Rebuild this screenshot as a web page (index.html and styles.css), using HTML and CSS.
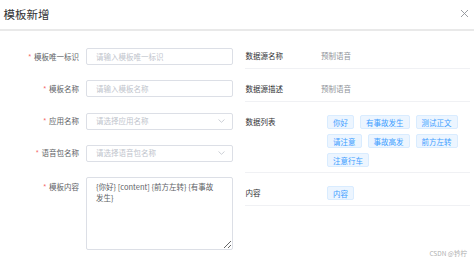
FILE: index.html
```html
<!DOCTYPE html>
<html lang="zh-CN">
<head>
<meta charset="utf-8">
<title>模板新增</title>
<link rel="stylesheet" href="styles.css">
</head>
<body>
<div class="dialog">
  <div class="header">
    <span class="title">模板新增</span>
    <span class="close"><svg width="9" height="9" viewBox="0 0 9 9"><path d="M1 1L8 8M8 1L1 8" stroke="#909399" stroke-width="0.9" fill="none"/></svg></span>
  </div>
  <div class="body">
    <div class="form">
      <div class="row">
        <label class="label"><span class="star">*</span>模板唯一标识</label>
        <div class="control"><input class="input" placeholder="请输入模板唯一标识"></div>
      </div>
      <div class="row">
        <label class="label"><span class="star">*</span>模板名称</label>
        <div class="control"><input class="input" placeholder="请输入模板名称"></div>
      </div>
      <div class="row">
        <label class="label"><span class="star">*</span>应用名称</label>
        <div class="control select"><span class="ph">请选择应用名称</span><svg class="chev" width="7" height="4" viewBox="0 0 7 4"><path d="M0.5 0.5L3.5 3.3L6.5 0.5" stroke="#c0c4cc" stroke-width="0.8" fill="none"/></svg></div>
      </div>
      <div class="row">
        <label class="label"><span class="star">*</span>语音包名称</label>
        <div class="control select"><span class="ph">请选择语音包名称</span><svg class="chev" width="7" height="4" viewBox="0 0 7 4"><path d="M0.5 0.5L3.5 3.3L6.5 0.5" stroke="#c0c4cc" stroke-width="0.8" fill="none"/></svg></div>
      </div>
      <div class="row row-top">
        <label class="label label-top"><span class="star">*</span>模板内容</label>
        <div class="control"><textarea class="textarea">{你好} [content] {前方左转} {有事故发生}</textarea></div>
      </div>
    </div>
    <div class="info">
      <div class="irow">
        <div class="ilabel">数据源名称</div>
        <div class="ival">预制语音</div>
      </div>
      <div class="irow">
        <div class="ilabel">数据源描述</div>
        <div class="ival">预制语音</div>
      </div>
      <div class="irow irow-top">
        <div class="ilabel">数据列表</div>
        <div class="tags">
          <span class="tag">你好</span>
          <span class="tag">有事故发生</span>
          <span class="tag">测试正文</span>
          <span class="tag">请注意</span>
          <span class="tag">事故高发</span>
          <span class="tag">前方左转</span>
          <span class="tag">注意行车</span>
        </div>
      </div>
      <div class="irow">
        <div class="ilabel">内容</div>
        <div class="tags">
          <span class="tag">内容</span>
        </div>
      </div>
    </div>
  </div>
  <div class="watermark">CSDN @钤柠</div>
</div>
</body>
</html>
```

FILE: styles.css
```css
* { box-sizing: border-box; }

html, body {
  margin: 0;
  padding: 0;
  background: #ffffff;
}

body {
  font-family: "Noto Sans CJK SC", "Noto Sans", sans-serif;
  color: #606266;
  width: 474px;
  height: 261px;
  overflow: hidden;
}

.dialog {
  position: relative;
  width: 474px;
  height: 261px;
}

.header {
  height: 31px;
  display: flex;
  align-items: center;
  justify-content: space-between;
  padding: 0 5px 2px 3.5px;
  border-bottom: 2px solid #e9e9e9;
}

.title {
  font-size: 11.5px;
  color: #303133;
  line-height: 14px;
}

.close {
  display: flex;
  width: 9px;
  height: 9px;
}

.body {
  display: flex;
}

.form {
  width: 233px;
  padding-top: 17px;
  display: flex;
  flex-direction: column;
  gap: 15.3px;
}

.row {
  display: flex;
  align-items: center;
}

.row-top {
  align-items: flex-start;
}

.label {
  width: 79px;
  margin-right: 7px;
  text-align: right;
  font-size: 7.5px;
  line-height: 10px;
  color: #606266;
  white-space: nowrap;
}

.label-top {
  padding-top: 5px;
}

.star {
  color: #f56c6c;
  margin-right: 2.5px;
}

.control {
  width: 147px;
}

.input {
  display: block;
  width: 100%;
  height: 17px;
  border: 1px solid #dcdfe6;
  border-radius: 2px;
  padding: 0 9px;
  font-family: inherit;
  font-size: 7.5px;
  color: #606266;
  outline: none;
  background: #fff;
}

.input::placeholder {
  color: #c0c4cc;
}

.select {
  height: 17px;
  border: 1px solid #dcdfe6;
  border-radius: 2px;
  padding: 0 7px 0 9px;
  display: flex;
  align-items: center;
  justify-content: space-between;
}

.ph {
  font-size: 7.5px;
  color: #c0c4cc;
  line-height: 10px;
}

.chev {
  display: block;
}

.textarea {
  display: block;
  width: 100%;
  height: 73px;
  border: 1px solid #dcdfe6;
  border-radius: 2px;
  padding: 4px 15px 4px 9px;
  font-family: inherit;
  font-size: 7.5px;
  line-height: 10.5px;
  color: #606266;
  outline: none;
  resize: vertical;
  background: #fff;
}

.info {
  width: 225px;
  margin-left: 12px;
  padding-top: 5px;
}

.irow {
  display: flex;
  align-items: center;
  padding: 13px 0 5px 0;
  border-bottom: 1px solid #f0f1f4;
}

.irow-top {
  align-items: flex-start;
}

.ilabel {
  width: 76px;
  flex: none;
  font-size: 7.5px;
  line-height: 14px;
  color: #303133;
  padding-left: 0.5px;
}

.ival {
  font-size: 7.5px;
  line-height: 14px;
  color: #909399;
}

.tags {
  display: flex;
  flex-wrap: wrap;
  gap: 5px 6px;
  margin-left: 6px;
  width: 136px;
}

.tag {
  display: inline-flex;
  align-items: center;
  height: 14px;
  padding: 0 5px;
  font-size: 7.5px;
  color: #409eff;
  background: #ecf5ff;
  border: 1px solid #d9ecff;
  border-radius: 2px;
  white-space: nowrap;
}

.watermark {
  position: absolute;
  right: 7px;
  bottom: 4px;
  font-size: 6.5px;
  color: #b0b0b0;
  line-height: 8px;
}
```
